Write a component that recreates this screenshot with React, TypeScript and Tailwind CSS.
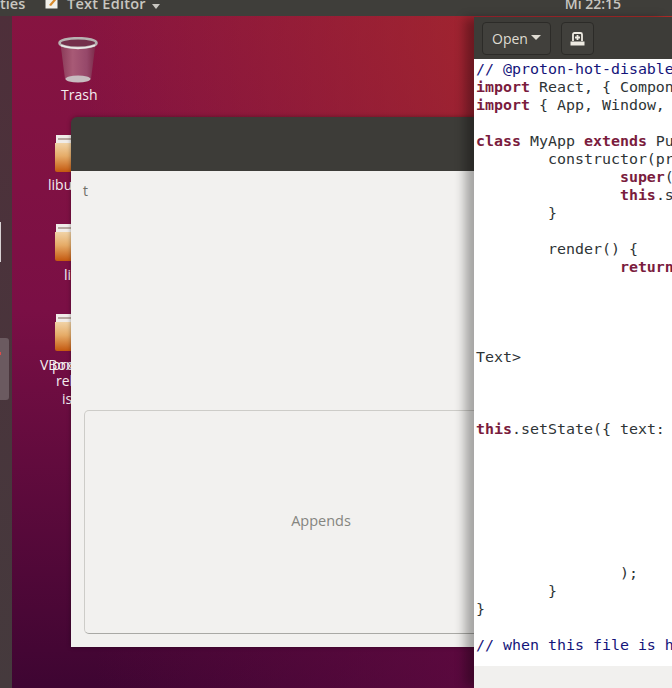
const sans = 'font-["Open_Sans","Noto_Sans",sans-serif]';

type Tok = { t: string; k?: 'kw' | 'cm' };

const code: Tok[][] = [
  [{ t: '// @proton-hot-disable', k: 'cm' }],
  [{ t: 'import', k: 'kw' }, { t: ' React, { Component' }],
  [{ t: 'import', k: 'kw' }, { t: ' { App, Window, Text' }],
  [],
  [{ t: 'class', k: 'kw' }, { t: ' MyApp ' }, { t: 'extends', k: 'kw' }, { t: ' PureComp' }],
  [{ t: '        constructor(props' }],
  [{ t: '                ' }, { t: 'super', k: 'kw' }, { t: '(props' }],
  [{ t: '                ' }, { t: 'this', k: 'kw' }, { t: '.state' }],
  [{ t: '        }' }],
  [],
  [{ t: '        render() {' }],
  [{ t: '                ' }, { t: 'return', k: 'kw' }, { t: ' (' }],
  [],
  [],
  [],
  [],
  [{ t: 'Text>' }],
  [],
  [],
  [],
  [{ t: 'this', k: 'kw' }, { t: '.setState({ text: ' }],
  [],
  [],
  [],
  [],
  [],
  [],
  [],
  [{ t: '                );' }],
  [{ t: '        }' }],
  [{ t: '}' }],
  [],
  [{ t: '// when this file is hot', k: 'cm' }],
];

function Trash() {
  return (
    <svg width="40" height="47" viewBox="0 0 40 47">
      <defs>
        <linearGradient id="bin" x1="0" x2="1" y1="0" y2="0">
          <stop offset="0" stopColor="#8a3a58" />
          <stop offset="0.35" stopColor="#a85a76" />
          <stop offset="0.75" stopColor="#96486a" />
          <stop offset="1" stopColor="#7c2c4a" />
        </linearGradient>
      </defs>
      <path d="M2.5 7 L7 42 Q20 47 33 42 L37.500 7 Z" fill="url(#bin)" />
      <ellipse cx="20" cy="42" rx="12.500" ry="3.500" fill="#c8bcc0" />
      <ellipse cx="20" cy="6" rx="18.500" ry="4.800" fill="#74304c" stroke="#b8b2b2" strokeWidth="2.600" />
      <path d="M3 8.500 Q20 14 37 8.500" stroke="#ece8e8" strokeWidth="1.800" fill="none" />
    </svg>
  );
}

function Folder({ id }: { id: string }) {
  return (
    <svg width="40" height="38" viewBox="0 0 40 38">
      <defs>
        <linearGradient id={id} x1="0" x2="0" y1="0" y2="1">
          <stop offset="0" stopColor="#f1d3a6" />
          <stop offset="0.45" stopColor="#e6ac68" />
          <stop offset="1" stopColor="#c4580f" />
        </linearGradient>
      </defs>
      <rect x="1" y="0" width="36" height="10" fill="#f0ece8" />
      <rect x="3" y="3" width="30" height="2" fill="#b8a8a0" />
      <path d="M0 8 H40 V35 Q40 37 38 37 H2 Q0 37 0 35 Z" fill={`url(#${id})`} />
    </svg>
  );
}

function DesktopIcons() {
  return (
    <div className={`absolute inset-0 text-[14px] text-[#f4eef0] ${sans}`}>
      <div className="absolute left-[58px] top-[37px]">
        <Trash />
      </div>
      <div className="absolute left-[61px] top-[86px] leading-[18px]">Trash</div>

      <div className="absolute left-[55px] top-[135px]">
        <Folder id="f1" />
      </div>
      <div className="absolute left-[48px] top-[176px] leading-[18px]">libuv</div>

      <div className="absolute left-[55px] top-[224px]">
        <Folder id="f2" />
      </div>
      <div className="absolute left-[64px] top-[266px] leading-[18px]">lib</div>

      <div className="absolute left-[55px] top-[314px]">
        <Folder id="f3" />
      </div>
      <div className="absolute left-[40px] top-[356px] leading-[18px]">VBox</div>
      <div className="absolute left-[52px] top-[356px] leading-[18px]">proton</div>
      <div className="absolute left-[56px] top-[372px] leading-[18px]">rele</div>
      <div className="absolute left-[62px] top-[390px] leading-[18px]">iso</div>
    </div>
  );
}

function TextWindow() {
  return (
    <div className="absolute left-[71px] top-[117px] flex h-[530px] w-[500px] flex-col overflow-hidden rounded-t-[6px] shadow-[0_0_4px_rgba(0,0,0,0.35)]">
      <div className="h-[54px] shrink-0 bg-[#3d3c38]" />
      <div className={`flex flex-1 flex-col bg-[#f2f1ef] pb-[13px] pl-[13px] pr-[13px] ${sans}`}>
        <div className="ml-[-1px] mt-[10px] flex-1 text-[14px] leading-[20px] text-[#70706a]">t</div>
        <div className="flex h-[224px] w-[474px] shrink-0 items-center justify-center rounded-[5px] border border-[#cdccc8] border-b-[#a9a9a5] pb-[3px] text-[14.5px] text-[#85857f]">
          Appends
        </div>
      </div>
    </div>
  );
}

function EditorWindow() {
  return (
    <div className="absolute left-[474px] top-[17px] flex h-[671px] w-[198px] flex-col overflow-hidden shadow-[-10px_0_10px_-1px_rgba(0,0,0,0.32)]">
      <div className={`flex h-[42px] shrink-0 items-center gap-[10px] bg-[#3d3c38] pl-[8px] pt-[1px] ${sans}`}>
        <div className="flex h-[33px] w-[69px] items-center justify-center gap-[3px] rounded-[4px] border border-[#2c2b28] bg-[#41403c] pb-[1px] text-[14px] text-[#dfdbd2]">
          Open
          <span className="mt-[-2px] h-0 w-0 border-x-[5px] border-t-[5px] border-x-transparent border-t-[#dfdbd2]" />
        </div>
        <div className="flex h-[33px] w-[33px] items-center justify-center rounded-[4px] border border-[#2c2b28] bg-[#41403c]">
          <svg width="15" height="14" viewBox="0 0 15 14">
            <path d="M3 9 V2.500 Q3 1 4.500 1 H10.500 Q12 1 12 2.500 V9" fill="none" stroke="#eeeae2" strokeWidth="1.800" />
            <path d="M0.500 9.500 H14.500 V13.500 H0.500 Z" fill="#eeeae2" />
            <path d="M7.500 3 V8 M5 5.500 H10" stroke="#eeeae2" strokeWidth="1.800" />
          </svg>
        </div>
      </div>
      <div className="h-[607px] shrink-0 overflow-hidden bg-white pl-[2px] pt-[1px] font-['DejaVu_Sans_Mono',monospace] text-[14.95px] leading-[18px] text-[#2e3436]">
        {code.map((line, i) => (
          <div key={i} className="h-[18px] whitespace-pre">
            {line.map((tok, j) => (
              <span
                key={j}
                className={
                  tok.k === 'kw' ? 'font-bold text-[#7a1c3e]' : tok.k === 'cm' ? 'text-[#14147a]' : ''
                }
              >
                {tok.t}
              </span>
            ))}
          </div>
        ))}
      </div>
      <div className="flex-1 bg-[#f1f0ee]" />
    </div>
  );
}

function TopBar() {
  return (
    <div className={`absolute inset-x-0 top-0 h-[16px] overflow-hidden bg-[#3f3e3a] text-[#c9c7c1] ${sans}`}>
      <div className="mt-[-5px] flex h-[18px] items-center text-[14.5px] font-semibold leading-[18px]">
        <span className="w-[45px] shrink-0 pr-[20px] text-right">ties</span>
        <svg className="mt-[-1px] shrink-0" width="14" height="11" viewBox="0 0 14 11">
          <rect x="0.500" y="0" width="12" height="10.500" fill="#f2f0ea" />
          <path d="M4 7 L10 0 L12 1 L6 8 Z" fill="#d98a2b" />
        </svg>
        <span className="ml-[8px] shrink-0 tracking-[0.25px]">Text Editor</span>
        <span className="ml-[6px] mt-[4px] h-0 w-0 shrink-0 border-x-[4.500px] border-t-[5px] border-x-transparent border-t-[#c9c7c1]" />
        <span className="ml-[405px] shrink-0 text-[14px]">Mi 22:15</span>
      </div>
    </div>
  );
}

function Dock() {
  return (
    <div className="absolute bottom-0 left-0 top-[16px] flex w-[12px] flex-col items-start bg-[linear-gradient(180deg,#4e2f3a_0%,#453a3d_100%)] pt-[206px]">
      <div className="h-[40px] w-[1px] bg-[#d8d2d4]" />
      <div className="mt-[76px] h-[62px] w-[9px] rounded-r-[3px] bg-[#6b5a60] pt-[14px]">
        <div className="h-[3px] w-[1px] bg-[#e04a4a]" />
      </div>
    </div>
  );
}

export default function App() {
  return (
    <div className="relative h-[688px] w-[672px] overflow-hidden bg-[radial-gradient(circle_at_100%_0%,#ad2c27_0%,rgba(170,40,40,0)_62%),radial-gradient(circle_at_100%_100%,#690b44_0%,rgba(105,11,68,0)_60%),linear-gradient(180deg,#871440_0%,#7a0f45_45%,#3e0532_100%)]">
      <TopBar />
      <Dock />
      <DesktopIcons />
      <TextWindow />
      <EditorWindow />
    </div>
  );
}
